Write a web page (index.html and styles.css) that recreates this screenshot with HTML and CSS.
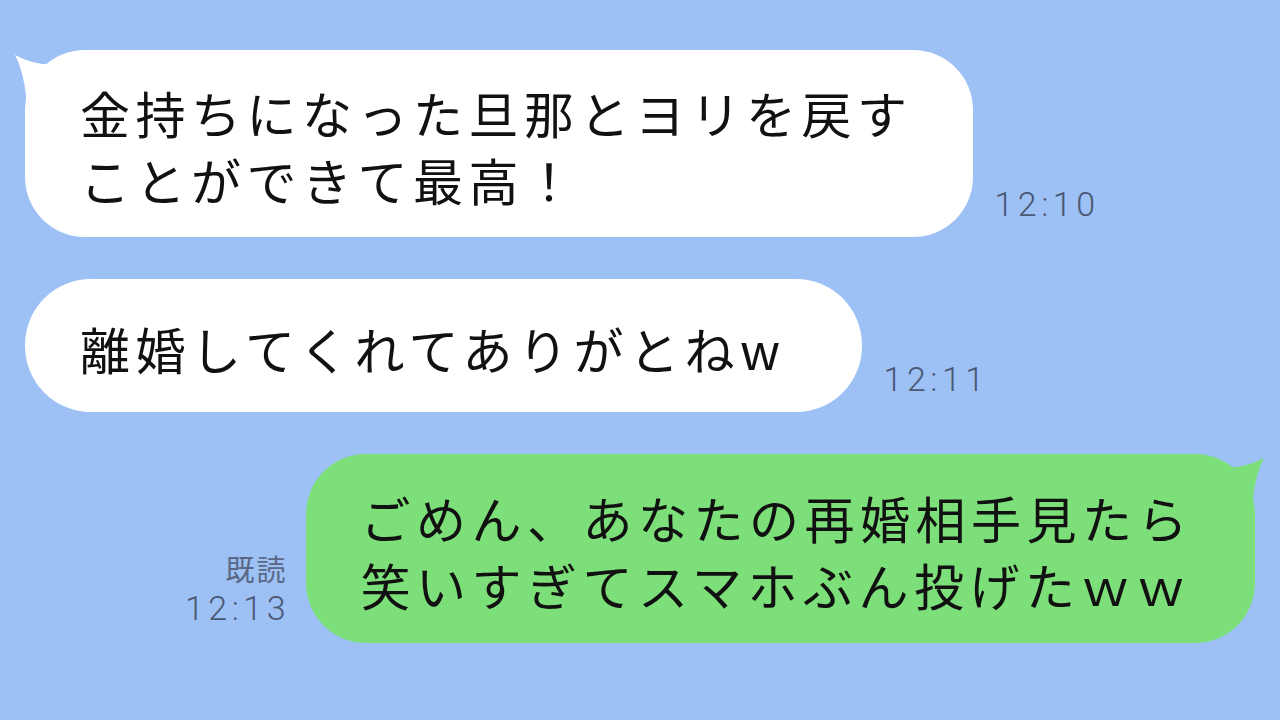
FILE: index.html
```html
<!DOCTYPE html>
<html lang="ja">
<head>
<meta charset="utf-8">
<link rel="stylesheet" href="styles.css">
</head>
<body>
<div class="chat">
  <div class="row">
    <div class="bubble white">
      <svg class="tail tail-left" width="50" height="70" viewBox="0 0 50 70"><path d="M0 0 Q22 12 46 9 L46 70 L12 70 Q13 25 0 0 Z" fill="#ffffff"/></svg>
      <p class="msg">金持ちになった旦那とヨリを戻す<br>ことができて最高！</p>
    </div>
    <span class="time">12:10</span>
  </div>
  <div class="row">
    <div class="bubble white single">
      <p class="msg">離婚してくれてありがとねw</p>
    </div>
    <span class="time">12:11</span>
  </div>
  <div class="row mine">
    <div class="meta">
      <span class="read">既読</span>
      <span class="time">12:13</span>
    </div>
    <div class="bubble green">
      <svg class="tail tail-right" width="50" height="70" viewBox="0 0 50 70"><path d="M50 0 Q28 12 4 9 L4 70 L38 70 Q37 25 50 0 Z" fill="#7ddf79"/></svg>
      <p class="msg">ごめん、あなたの再婚相手見たら<br>笑いすぎてスマホぶん投げたｗｗ</p>
    </div>
  </div>
</div>
</body>
</html>
```

FILE: styles.css
```css
html, body {
  margin: 0;
  padding: 0;
}
body {
  width: 1280px;
  height: 720px;
  background: #9dc0f5;
  overflow: hidden;
  font-family: "Noto Sans CJK JP", "Noto Sans", sans-serif;
}
.chat {
  display: flex;
  flex-direction: column;
  gap: 42px;
  padding: 50px 25px 0 25px;
}
.row {
  display: flex;
  align-items: flex-end;
  gap: 22px;
}
.row.mine {
  justify-content: flex-end;
  gap: 20px;
}
.bubble {
  position: relative;
  border-radius: 60px;
  padding: 29px 60px 24px 55px;
}
.bubble.white {
  background: #ffffff;
}
.bubble.green {
  background: #7ddf79;
  padding: 30px 62px 25px 55px;
}
.bubble.single {
  padding: 36px 76px 30px 55px;
  border-radius: 66px;
}
.msg {
  position: relative;
  margin: 0;
  font-size: 50px;
  line-height: 67px;
  letter-spacing: 5.5px;
  color: #111111;
  white-space: nowrap;
}
.tail {
  position: absolute;
  top: 5px;
}
.tail-left {
  left: -10px;
}
.tail-right {
  right: -9px;
  top: 4px;
}
.time {
  font-family: Roboto, "Liberation Sans", sans-serif;
  font-weight: 300;
  font-size: 34px;
  line-height: 34px;
  letter-spacing: 4.5px;
  color: #4a5873;
  margin-bottom: 16px;
}
.meta {
  display: flex;
  flex-direction: column;
  align-items: flex-end;
  gap: 6px;
  margin-bottom: 18px;
}
.meta .time {
  margin-bottom: 0;
  margin-right: -4.5px;
}
.read {
  font-size: 29px;
  line-height: 34px;
  letter-spacing: 2px;
  color: #5a6886;
  margin-right: -2px;
}
```
